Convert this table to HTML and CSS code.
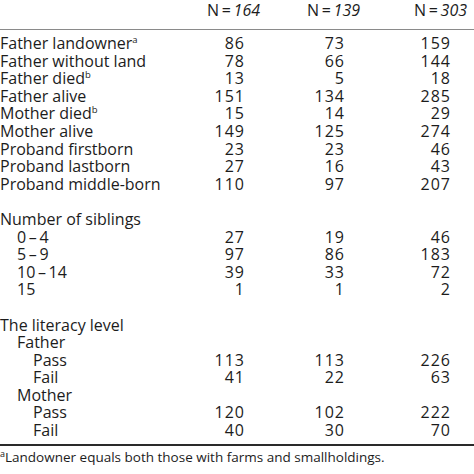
FILE: index.html
```html
<!DOCTYPE html>
<html>
<head>
<meta charset="utf-8">
<link rel="stylesheet" href="styles.css">
</head>
<body>
<table class="tbl">
  <colgroup>
    <col class="c-label">
    <col class="c-num">
    <col class="c-num">
    <col class="c-last">
  </colgroup>
  <thead>
    <tr class="head">
      <th></th>
      <th class="hn">N&#8201;=&#8201;<i>164</i></th>
      <th class="hn">N&#8201;=&#8201;<i>139</i></th>
      <th class="hn hn-last">N&#8201;=&#8201;<i>303</i></th>
    </tr>
  </thead>
  <tbody>
    <tr class="first"><td>Father landowner<sup>a</sup></td><td class="n">86</td><td class="n">73</td><td class="n nl">159</td></tr>
    <tr><td>Father without land</td><td class="n">78</td><td class="n">66</td><td class="n nl">144</td></tr>
    <tr><td>Father died<sup>b</sup></td><td class="n">13</td><td class="n">5</td><td class="n nl">18</td></tr>
    <tr><td>Father alive</td><td class="n">151</td><td class="n">134</td><td class="n nl">285</td></tr>
    <tr><td>Mother died<sup>b</sup></td><td class="n">15</td><td class="n">14</td><td class="n nl">29</td></tr>
    <tr><td>Mother alive</td><td class="n">149</td><td class="n">125</td><td class="n nl">274</td></tr>
    <tr><td>Proband firstborn</td><td class="n">23</td><td class="n">23</td><td class="n nl">46</td></tr>
    <tr><td>Proband lastborn</td><td class="n">27</td><td class="n">16</td><td class="n nl">43</td></tr>
    <tr><td>Proband middle-born</td><td class="n">110</td><td class="n">97</td><td class="n nl">207</td></tr>
    <tr><td>&nbsp;</td><td></td><td></td><td></td></tr>
    <tr><td>Number of siblings</td><td></td><td></td><td></td></tr>
    <tr><td class="i1">0&#8201;&#8211;&#8201;4</td><td class="n">27</td><td class="n">19</td><td class="n nl">46</td></tr>
    <tr><td class="i1">5&#8201;&#8211;&#8201;9</td><td class="n">97</td><td class="n">86</td><td class="n nl">183</td></tr>
    <tr><td class="i1">10&#8201;&#8211;&#8201;14</td><td class="n">39</td><td class="n">33</td><td class="n nl">72</td></tr>
    <tr><td class="i1">15</td><td class="n">1</td><td class="n">1</td><td class="n nl">2</td></tr>
    <tr><td>&nbsp;</td><td></td><td></td><td></td></tr>
    <tr><td>The literacy level</td><td></td><td></td><td></td></tr>
    <tr><td class="i1">Father</td><td></td><td></td><td></td></tr>
    <tr><td class="i2">Pass</td><td class="n">113</td><td class="n">113</td><td class="n nl">226</td></tr>
    <tr><td class="i2">Fail</td><td class="n">41</td><td class="n">22</td><td class="n nl">63</td></tr>
    <tr><td class="i1">Mother</td><td></td><td></td><td></td></tr>
    <tr><td class="i2">Pass</td><td class="n">120</td><td class="n">102</td><td class="n nl">222</td></tr>
    <tr class="last"><td class="i2">Fail</td><td class="n">40</td><td class="n">30</td><td class="n nl">70</td></tr>
  </tbody>
</table>
<p class="foot"><sup>a</sup>Landowner equals both those with farms and smallholdings.</p>
</body>
</html>
```

FILE: styles.css
```css
html, body {
  margin: 0;
  padding: 0;
  background: #ffffff;
}
body {
  font-family: "Open Sans", Lato, sans-serif;
  font-size: 16px;
  color: #1c1c1c;
  width: 474px;
  overflow: hidden;
}
.tbl {
  width: 474px;
  border-collapse: collapse;
  table-layout: fixed;
}
.c-label { width: 160px; }
.c-num { width: 100px; }
.c-last { width: 114px; }
th, td {
  padding: 0;
  height: 17.6px;
  line-height: 17.6px;
  white-space: nowrap;
  font-weight: normal;
  text-align: left;
}
.head th {
  height: 27px;
  line-height: 17.6px;
  vertical-align: top;
  padding-top: 2px;
  border-bottom: 1px solid #8a8a8a;
}
.hn { text-align: right; }
.hn-last { padding-right: 7px; }
.first td { padding-top: 5px; }
.last td { padding-bottom: 4px; border-bottom: 2px solid #2a2a2a; }
.n { text-align: right; padding-right: 15px; letter-spacing: 1px; }
.nl { padding-right: 23px; }
.i1 { padding-left: 17px; }
.i2 { padding-left: 33px; }
sup {
  font-size: 9.5px;
  line-height: 0;
  vertical-align: 6px;
}
.foot {
  margin: 3px 0 0 0;
  line-height: 17px;
  font-size: 13.5px;
}
.foot sup { font-size: 9px; vertical-align: 5px; }
```
